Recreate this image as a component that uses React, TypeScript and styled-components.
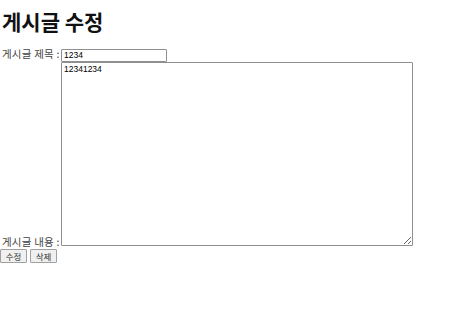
import React from 'react';
import styled, { createGlobalStyle } from 'styled-components';

const GlobalStyle = createGlobalStyle`
  body {
    margin: 0;
    background: #ffffff;
    font-family: "Noto Sans CJK KR", "Noto Sans", sans-serif;
  }
`;

const Page = styled.div`
  padding: 0;
`;

const Title = styled.h1`
  margin: 7px 0 12px 2px;
  font-size: 21px;
  font-weight: 700;
  line-height: 28px;
  color: #111;
`;

const Form = styled.form`
  display: block;
  font-size: 10.5px;
  line-height: 13px;
  color: #444;
`;

const Row = styled.div`
  display: block;
`;

const Label = styled.label`
  display: inline-block;
  margin-left: 2px;
  width: 59px;
  letter-spacing: 0.2px;
  white-space: nowrap;
`;

const TitleInput = styled.input`
  box-sizing: border-box;
  width: 106px;
  height: 13px;
  padding: 0 2px;
  margin: 0;
  border: 1px solid #8f8f8f;
  border-radius: 1px;
  font-family: "Liberation Sans", Arial, sans-serif;
  font-size: 8.5px;
  color: #000;
  vertical-align: baseline;
`;

const BodyArea = styled.textarea`
  box-sizing: border-box;
  width: 352px;
  height: 184px;
  padding: 1px 2px;
  margin: 0;
  border: 1px solid #8f8f8f;
  border-radius: 1px;
  font-family: "Liberation Sans", Arial, sans-serif;
  font-size: 8.5px;
  color: #000;
  resize: both;
  vertical-align: baseline;
`;

const Actions = styled.div`
  display: flex;
  gap: 3px;
  margin-top: 1px;
`;

const Button = styled.button`
  box-sizing: border-box;
  height: 14px;
  width: 27px;
  padding: 0;
  border: 1px solid #a0a0a0;
  border-radius: 1px;
  background: #f0f0f0;
  font-family: "Noto Sans CJK KR", sans-serif;
  font-size: 8.5px;
  line-height: 12px;
  color: #333;
`;

export default function App() {
  return (
    <Page>
      <GlobalStyle />
      <Title>게시글 수정</Title>
      <Form>
        <Row>
          <Label>게시글 제목 :</Label>
          <TitleInput defaultValue="1234" />
        </Row>
        <Row>
          <Label>게시글 내용 :</Label>
          <BodyArea defaultValue="12341234" />
        </Row>
        <Actions>
          <Button type="button">수정</Button>
          <Button type="button">삭제</Button>
        </Actions>
      </Form>
    </Page>
  );
}
